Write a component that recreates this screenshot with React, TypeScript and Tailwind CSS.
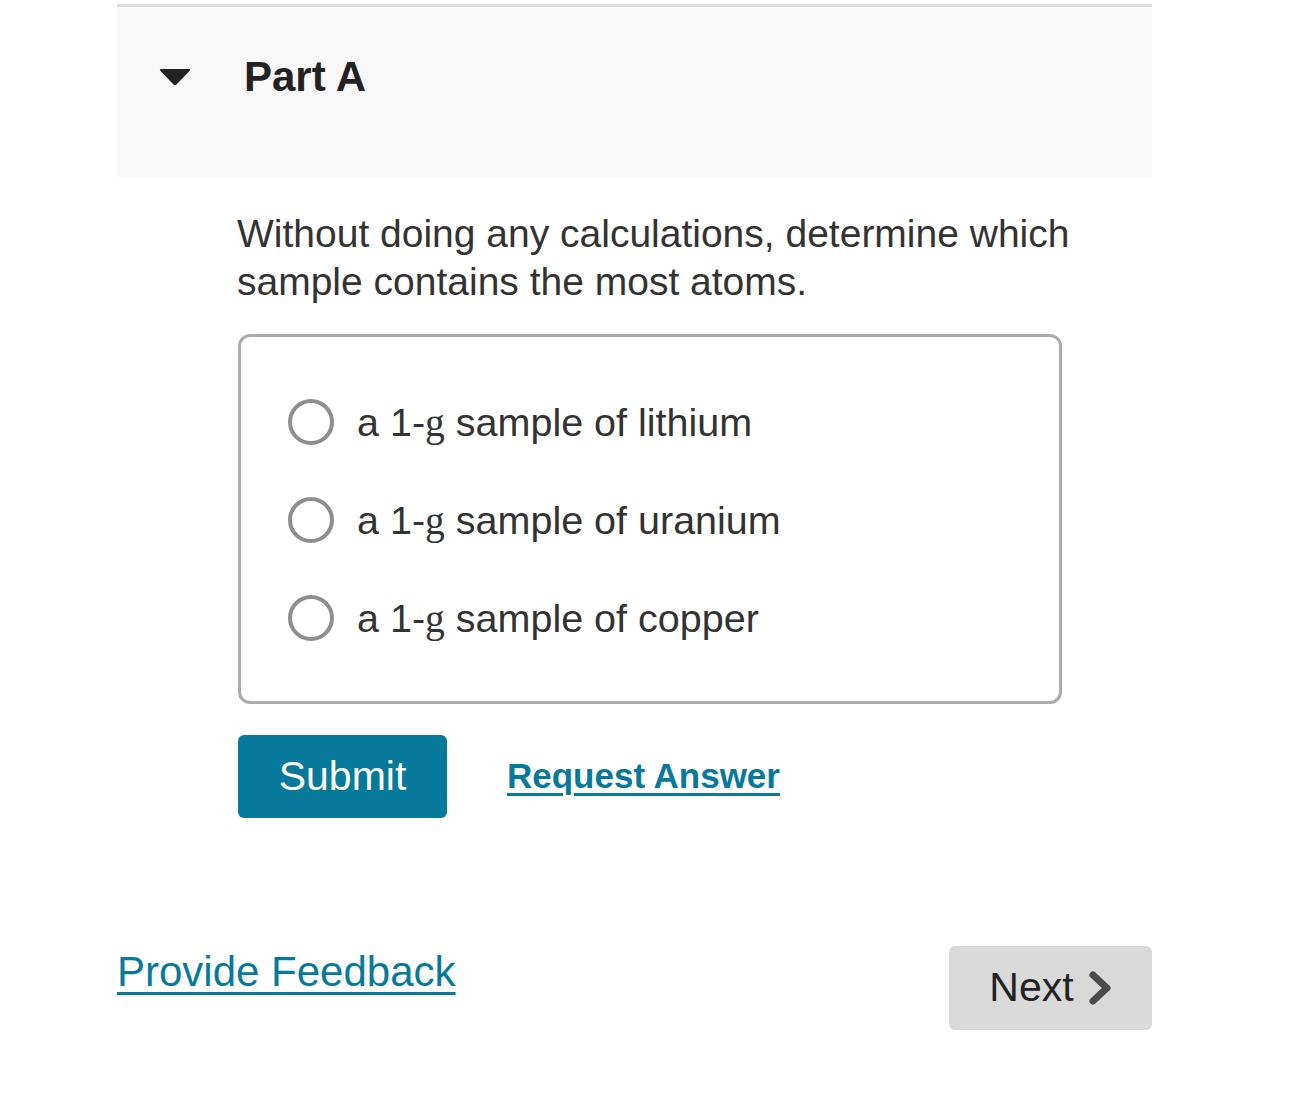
export default function App() {
  const options = ["lithium", "uranium", "copper"];

  return (
    <div className="min-h-screen bg-white pt-[4px] font-['Liberation_Sans',Arial,sans-serif] text-[#333]">
      <div className="mx-[117px] w-[1035px]">
        {/* header */}
        <div className="h-[173px] border-t-[3px] border-[#dedede] bg-[#f8f8f8]">
          <div className="flex items-center pt-[44px]">
            <svg className="ml-[42px] h-[18px] w-[32px]" viewBox="0 0 32 18">
              <path d="M2 1 L30 1 Q32 1 30.5 3 L17.5 16.5 Q16 18 14.5 16.5 L1.5 3 Q0 1 2 1 Z" fill="#222" />
            </svg>
            <h2 className="ml-[53px] text-[42px] font-bold leading-[52px] text-[#222]">Part A</h2>
          </div>
        </div>

        <div className="pl-[120px]">
          {/* question */}
          <p className="mt-[33px] text-[39px] leading-[48px] text-[#333]">
            Without doing any calculations, determine which sample contains the most atoms.
          </p>

          {/* choices */}
          <div className="mt-[28px] ml-[1px] w-[824px] rounded-[12px] border-[3px] border-[#acacac] pb-[34px] pl-[47px] pt-[36px]">
            {options.map((o) => (
              <label key={o} className="flex h-[98px] items-center">
                <span className="h-[46px] w-[46px] shrink-0 rounded-full border-[4px] border-[#8e8e90]" />
                <span className="ml-[23px] text-[39.5px] leading-[48px] text-[#333]">
                  a 1-<span className="font-['Liberation_Serif',serif]">g</span> sample of {o}
                </span>
              </label>
            ))}
          </div>

          {/* actions */}
          <div className="mt-[31px] flex items-center">
            <button className="ml-[1px] h-[83px] w-[209px] rounded-[6px] bg-[#077a9b] text-[41px] text-white">
              Submit
            </button>
            <a className="ml-[60px] text-[35px] font-bold text-[#077a9b] underline decoration-[3px] underline-offset-[5px]">
              Request Answer
            </a>
          </div>
        </div>

        {/* footer */}
        <div className="mt-[128px] flex items-start justify-between">
          <a className="mt-[2px] text-[42px] leading-[48px] text-[#077a9b] underline decoration-[3px] underline-offset-[6px]">
            Provide Feedback
          </a>
          <button className="flex h-[84px] w-[203px] items-center justify-center rounded-[6px] bg-[#d9d9d9] text-[41px] text-[#222]">
            <span>Next</span>
            <svg className="ml-[14px] h-[36px] w-[24px]" viewBox="0 0 24 36">
              <polyline points="5,5 19,18 5,31" fill="none" stroke="#4a4a4a" strokeWidth="7" strokeLinecap="round" strokeLinejoin="round" />
            </svg>
          </button>
        </div>
      </div>
    </div>
  );
}
